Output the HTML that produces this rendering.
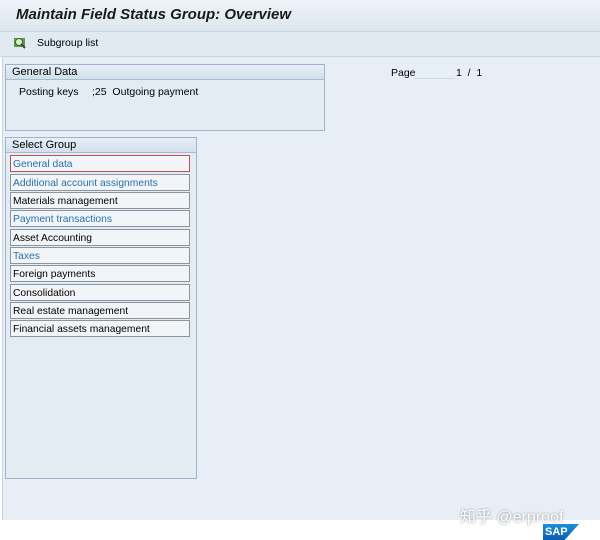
<!DOCTYPE html><html><head><style>
body{margin:0;width:600px;height:540px;background:#fff;font-family:"Liberation Sans",Tahoma,sans-serif;font-size:11px;color:#000;position:relative;overflow:hidden}
.a{position:absolute}
.title{left:0;top:0;width:600px;height:31px;background:linear-gradient(#eef3f8,#dde6ef);border-bottom:1px solid #c9d4df}
.title span{position:absolute;left:16px;top:6px;font-size:15px;font-weight:bold;font-style:italic;color:#1a1a1a}
.tb{left:0;top:32px;width:600px;height:24px;background:#e1e9f1;border-bottom:1px solid #c8d3de}
.main{left:2px;top:57px;width:598px;height:463px;background:#e8eef5;border-left:1px solid #c8d3de}
.panel{border:1px solid #9fb4cb;background:#e3ebf3}
.ph{position:absolute;left:0;top:0;right:0;height:14px;background:linear-gradient(#e8eff7,#d2dfec);border-bottom:1px solid #a6bad0;padding-left:6px;line-height:14px}
.btn{position:absolute;left:10px;width:176px;height:15px;border:1px solid #8c959e;background:#f2f5f8;line-height:17px;padding-left:2px;box-sizing:content-box;font-size:10.3px;overflow:hidden}
.bl{color:#2a6fa8}
</style></head><body>
<div class="a title"><span>Maintain Field Status Group: Overview</span></div>
<div class="a tb">
<svg class="a" style="left:13px;top:4px" width="14" height="14"><rect x="1" y="2" width="11" height="9" fill="#5a9a4a"/><circle cx="6" cy="6" r="3.5" fill="#dff0c0" stroke="#3a6a30"/><line x1="8" y1="8" x2="12" y2="12" stroke="#444" stroke-width="2"/></svg>
<span class="a" style="left:37px;top:5px;font-size:10.5px">Subgroup list</span></div>
<div class="a main"></div>
<div class="a panel" style="left:5px;top:64px;width:318px;height:65px"><div class="ph">General Data</div>
<span class="a" style="left:13px;top:21px;font-size:10.5px">Posting keys</span><span class="a" style="left:86px;top:21px;font-size:10.5px">;25&nbsp; Outgoing payment</span></div>
<span class="a" style="left:391px;top:67px;font-size:10.5px">Page</span><div class="a" style="left:415px;top:78px;width:40px;border-top:1px solid #d0d8e0"></div>
<span class="a" style="left:456px;top:67px;font-size:10.5px">1&nbsp; /&nbsp; 1</span>
<div class="a panel" style="left:5px;top:137px;width:190px;height:340px"><div class="ph">Select Group</div></div>
<div class="btn bl" style="top:155px;border-color:#c05050">General data</div>
<div class="btn bl" style="top:174px">Additional account assignments</div>
<div class="btn" style="top:192px">Materials management</div>
<div class="btn bl" style="top:210px">Payment transactions</div>
<div class="btn" style="top:229px">Asset Accounting</div>
<div class="btn bl" style="top:247px">Taxes</div>
<div class="btn" style="top:265px">Foreign payments</div>
<div class="btn" style="top:284px">Consolidation</div>
<div class="btn" style="top:302px">Real estate management</div>
<div class="btn" style="top:320px">Financial assets management</div>
<span class="a" style="left:460px;top:503px;font-size:16px;color:#fff;text-shadow:0 0 2px #888;font-family:'Liberation Sans','Noto Sans CJK SC',sans-serif">知乎 @erproof</span>
<div class="a" style="left:543px;top:524px;width:34px;height:16px;background:linear-gradient(#1b8fd8,#0a5fb0);clip-path:polygon(0 0,100% 0,60% 100%,0 100%);color:#fff;font-weight:bold;font-size:11px;padding-left:2px;line-height:16px">SAP</div>
</body></html>
